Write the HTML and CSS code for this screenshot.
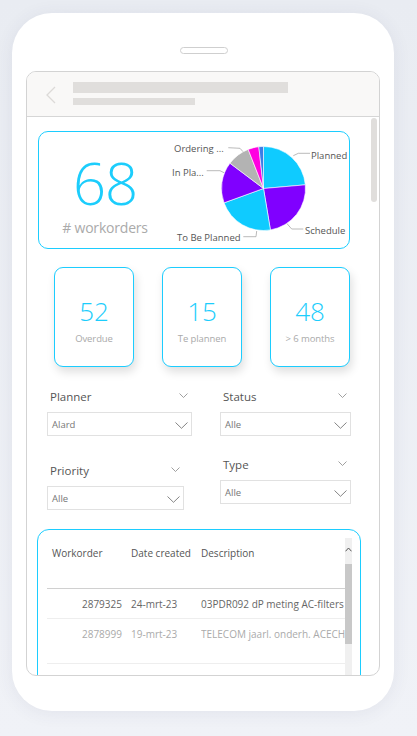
FILE: index.html
```html
<!DOCTYPE html>
<html>
<head>
<meta charset="utf-8">
<link rel="stylesheet" href="styles.css">
</head>
<body>
<div class="phone">
  <div class="speaker"></div>
  <div class="screen">
    <div class="topbar">
      <svg class="back" width="12" height="18" viewBox="0 0 12 18"><path d="M10 1 L2 9 L10 17" fill="none" stroke="#dcdad8" stroke-width="1.3"/></svg>
      <div class="titles">
        <div class="t1"></div>
        <div class="t2"></div>
      </div>
    </div>
    <div class="body">
      <div class="scrollthumb"></div>
      <div class="content">
        <div class="kpi">
          <div class="kpi-left">
            <div class="big">68</div>
            <div class="biglabel"># workorders</div>
          </div>
          <svg class="pie" width="178" height="116" viewBox="0 0 178 116">
            <g stroke="#fff" stroke-width="0.6">
              <path d="M92.5 56.5 L92.5 14.5 A42 42 0 0 1 134.34 52.84 Z" fill="#0fcbff"/>
              <path d="M92.5 56.5 L134.34 52.84 A42 42 0 0 1 99.43 97.93 Z" fill="#8000ff"/>
              <path d="M92.5 56.5 L99.43 97.93 A42 42 0 0 1 53.03 70.86 Z" fill="#0fcbff"/>
              <path d="M92.5 56.5 L53.03 70.86 A42 42 0 0 1 58.96 31.22 Z" fill="#8000ff"/>
              <path d="M92.5 56.5 L58.96 31.22 A42 42 0 0 1 77.17 17.39 Z" fill="#b3b3b3"/>
              <path d="M92.5 56.5 L77.17 17.39 A42 42 0 0 1 87.82 14.76 Z" fill="#ff00e0"/>
              <path d="M92.5 56.5 L87.82 14.76 A42 42 0 0 1 92.5 14.5 Z" fill="#3b7de6"/>
            </g>
            <g fill="none" stroke="#a8a8a8" stroke-width="0.8">
              <path d="M57.3 15.7 L69 16.3 L72 19.7"/>
              <path d="M35.7 38.7 L49 38.7 L53 40.7"/>
              <path d="M122.3 23.7 L127.3 21.3 L139 21.3"/>
              <path d="M115.7 91.3 L120.7 97 L132.3 97"/>
              <path d="M72.3 104.7 L85 104.7 L85.7 99"/>
            </g>
            <g class="plabel">
              <text x="3" y="20">Ordering ...</text>
              <text x="1" y="44">In Pla...</text>
              <text x="140" y="27">Planned</text>
              <text x="134" y="102">Schedule</text>
              <text x="6" y="109">To Be Planned</text>
            </g>
          </svg>
        </div>

        <div class="cards">
          <div class="card"><div class="num">52</div><div class="lbl">Overdue</div></div>
          <div class="card"><div class="num">15</div><div class="lbl">Te plannen</div></div>
          <div class="card"><div class="num">48</div><div class="lbl">&gt; 6 months</div></div>
        </div>

        <div class="filters">
          <div class="fcol fcol-left">
            <div class="filter">
              <div class="fhead"><span>Planner</span><svg class="sm" width="9" height="5" viewBox="0 0 9 5"><path d="M0.5 0.5 L4.5 4.5 L8.5 0.5" fill="none" stroke="#888" stroke-width="0.8"/></svg></div>
              <div class="fbox"><span>Alard</span><svg class="lg" width="13" height="7" viewBox="0 0 13 7"><path d="M0.5 0.5 L6.5 6.3 L12.5 0.5" fill="none" stroke="#777" stroke-width="0.9"/></svg></div>
            </div>
            <div class="filter second-left">
              <div class="fhead"><span>Priority</span><svg class="sm" width="9" height="5" viewBox="0 0 9 5"><path d="M0.5 0.5 L4.5 4.5 L8.5 0.5" fill="none" stroke="#888" stroke-width="0.8"/></svg></div>
              <div class="fbox"><span>Alle</span><svg class="lg" width="13" height="7" viewBox="0 0 13 7"><path d="M0.5 0.5 L6.5 6.3 L12.5 0.5" fill="none" stroke="#777" stroke-width="0.9"/></svg></div>
            </div>
          </div>
          <div class="fcol fcol-right">
            <div class="filter">
              <div class="fhead"><span>Status</span><svg class="sm" width="9" height="5" viewBox="0 0 9 5"><path d="M0.5 0.5 L4.5 4.5 L8.5 0.5" fill="none" stroke="#888" stroke-width="0.8"/></svg></div>
              <div class="fbox"><span>Alle</span><svg class="lg" width="13" height="7" viewBox="0 0 13 7"><path d="M0.5 0.5 L6.5 6.3 L12.5 0.5" fill="none" stroke="#777" stroke-width="0.9"/></svg></div>
            </div>
            <div class="filter second-right">
              <div class="fhead"><span>Type</span><svg class="sm" width="9" height="5" viewBox="0 0 9 5"><path d="M0.5 0.5 L4.5 4.5 L8.5 0.5" fill="none" stroke="#888" stroke-width="0.8"/></svg></div>
              <div class="fbox"><span>Alle</span><svg class="lg" width="13" height="7" viewBox="0 0 13 7"><path d="M0.5 0.5 L6.5 6.3 L12.5 0.5" fill="none" stroke="#777" stroke-width="0.9"/></svg></div>
            </div>
          </div>
        </div>

        <div class="tablecard">
          <div class="tablewrap">
            <div class="table">
              <div class="thead">
                <div class="c1">Workorder</div>
                <div class="c2">Date created</div>
                <div class="c3">Description</div>
              </div>
              <div class="trow r1">
                <div class="c1 num-r">2879325</div>
                <div class="c2">24-mrt-23</div>
                <div class="c3">03PDR092 dP meting AC-filters</div>
              </div>
              <div class="trow r2">
                <div class="c1 num-r">2878999</div>
                <div class="c2">19-mrt-23</div>
                <div class="c3">TELECOM jaarl. onderh. ACECH</div>
              </div>
              <div class="trow r3"></div>
            </div>
            <div class="vscroll">
              <svg class="up" width="7" height="5" viewBox="0 0 7 5"><path d="M0.5 4.3 L3.5 1 L6.5 4.3" fill="none" stroke="#555" stroke-width="1"/></svg>
              <div class="vthumb"></div>
            </div>
          </div>
        </div>
      </div>
    </div>
  </div>
</div>
</body>
</html>
```
FILE: styles.css
```css
* { box-sizing: border-box; }
html, body { margin: 0; padding: 0; }
body {
  width: 417px;
  height: 736px;
  overflow: hidden;
  background: linear-gradient(180deg, #e9ecf2 0%, #f0f2f7 100%);
  font-family: "Open Sans", "Noto Sans", sans-serif;
  padding-top: 13px;
  padding-left: 12px;
}
.phone {
  width: 382px;
  height: 698px;
  background: #fff;
  border-radius: 40px;
  box-shadow: 0 2px 18px rgba(60, 70, 100, 0.08);
  padding-top: 34px;
  padding-left: 14px;
}
.speaker {
  width: 48px;
  height: 7px;
  border: 1px solid #cfcfcf;
  border-radius: 4px;
  margin-left: 154px;
}
.screen {
  margin-top: 17px;
  width: 354px;
  height: 605px;
  border: 1px solid #d3d3d3;
  border-radius: 10px;
  overflow: hidden;
  display: flex;
  flex-direction: column;
}
.topbar {
  height: 45px;
  flex: none;
  background: #f9f8f7;
  border-bottom: 1px solid #d6d6d6;
  display: flex;
  align-items: flex-start;
}
.back { margin-left: 18px; margin-top: 14px; }
.titles { margin-left: 16px; margin-top: 10px; }
.t1 { width: 215px; height: 11px; background: #e0dedc; }
.t2 { width: 122px; height: 7px; background: #e0dedc; margin-top: 5px; }

.body {
  position: relative;
  flex: 1;
  overflow: hidden;
}
.scrollthumb {
  position: absolute;
  right: 2px;
  top: 1px;
  width: 6px;
  height: 84px;
  border-radius: 3px;
  background: #e0dedc;
}
.content {
  padding-left: 11px;
  padding-top: 14px;
}
.kpi {
  width: 312px;
  height: 118px;
  border: 1.3px solid #1ccdff;
  border-radius: 10px;
  display: flex;
}
.kpi-left {
  width: 132px;
  display: flex;
  flex-direction: column;
  align-items: center;
}
.big {
  font-weight: 300;
  font-size: 58px;
  line-height: 50px;
  color: #1ccdfc;
  margin-top: 26px;
  letter-spacing: -1px;
}
.biglabel {
  font-size: 14px;
  line-height: 18px;
  color: #aaa;
  margin-top: 11px;
  font-weight: 400;
  letter-spacing: -0.2px;
}
.pie { display: block; flex: none; }
.plabel text {
  font-family: "Open Sans", "Noto Sans", sans-serif;
  font-size: 9.5px;
  fill: #555;
}

.cards {
  display: flex;
  gap: 28px;
  margin-left: 16px;
  margin-top: 18px;
}
.card {
  width: 80px;
  height: 100px;
  border: 1.3px solid #1ccdff;
  border-radius: 9px;
  box-shadow: 2px 5px 10px rgba(0, 0, 0, 0.13);
  display: flex;
  flex-direction: column;
  align-items: center;
  background: #fff;
}
.num {
  font-weight: 300;
  font-size: 26px;
  line-height: 28px;
  color: #1ccdfc;
  margin-top: 29px;
}
.lbl {
  font-size: 9.5px;
  color: #aaa;
  margin-top: 7px;
  letter-spacing: -0.1px;
}

.filters {
  display: flex;
  margin-left: 9px;
  margin-top: 21px;
  gap: 28px;
}
.fcol { display: flex; flex-direction: column; }
.fcol-left { width: 145px; }
.fcol-right { width: 131px; }
.second-left { margin-top: 26px; width: 137px; }
.second-right { margin-top: 20px; }
.fhead {
  height: 24px;
  display: flex;
  align-items: flex-start;
  justify-content: space-between;
  padding-left: 3px;
  padding-right: 4px;
  font-size: 11.5px;
  line-height: 16px;
  color: #555;
  padding-top: 1px;
}
.fhead .sm { margin-top: 4px; }
.fbox {
  height: 24px;
  border: 1px solid #e1e1e1;
  display: flex;
  align-items: center;
  justify-content: space-between;
  padding-left: 4px;
  padding-right: 3px;
  font-size: 9.5px;
  color: #777;
}
.fbox .lg { margin-top: 3px; }

.tablecard {
  margin-top: 19px;
  margin-left: -1px;
  width: 324px;
  height: 160px;
  border: 1.3px solid #1ccdff;
  border-radius: 12px;
  padding-top: 8px;
  padding-left: 9px;
}
.tablewrap {
  display: flex;
  height: 100%;
}
.table {
  width: 298px;
  font-size: 10px;
  overflow: hidden;
}
.thead, .trow {
  display: flex;
  white-space: nowrap;
}
.thead {
  height: 51px;
  border-bottom: 1px solid #d0d0d0;
  color: #555;
  padding-top: 8px;
  line-height: 14px;
}
.thead .c1 { width: 84px; padding-left: 5px; }
.c1 { width: 84px; flex: none; }
.c2 { width: 70px; flex: none; }
.c3 { flex: 1; overflow: hidden; }
.num-r { text-align: right; padding-right: 9px; width: 84px; }
.trow {
  line-height: 14px;
  border-bottom: 1px solid #eeeeee;
}
.r1 { height: 30px; padding-top: 8px; color: #666; }
.r2 { height: 45px; padding-top: 8px; color: #aaa; }
.r3 { height: 30px; }
.vscroll {
  width: 7px;
  flex: none;
  background: #f0f0f0;
  display: flex;
  flex-direction: column;
  align-items: center;
}
.vscroll .up { margin-top: 9px; }
.vthumb {
  width: 7px;
  height: 80px;
  background: #c8c8c8;
  margin-top: 12px;
}
```
